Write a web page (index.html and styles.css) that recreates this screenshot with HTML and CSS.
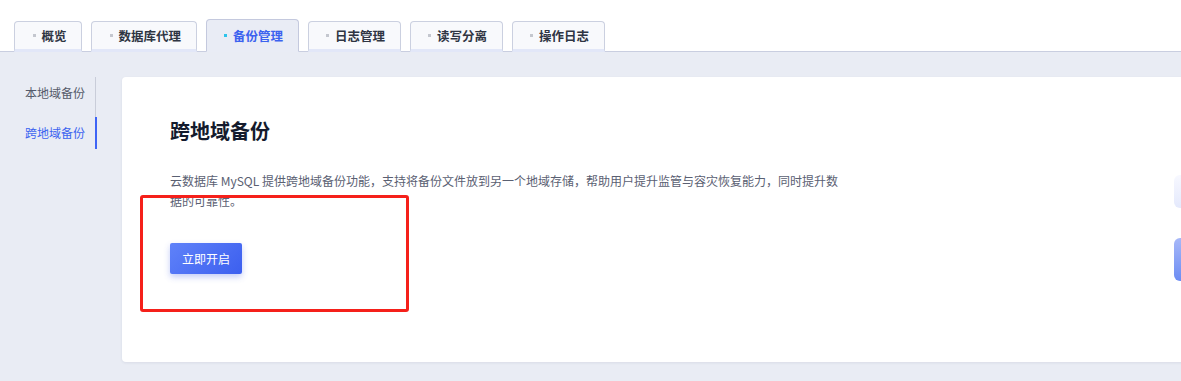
FILE: index.html
```html
<!DOCTYPE html>
<html lang="zh-CN">
<head>
    <meta charset="UTF-8">
    <meta name="viewport" content="width=device-width, initial-scale=1.0">
    <title>跨地域备份</title>
    <link rel="stylesheet" href="styles.css">
</head>
<body>
    <!-- Tabs -->
    <div class="tab-bar">
        <div class="tab"><span class="dot"></span>概览</div>
        <div class="tab"><span class="dot"></span>数据库代理</div>
        <div class="tab active"><span class="dot"></span>备份管理</div>
        <div class="tab"><span class="dot"></span>日志管理</div>
        <div class="tab"><span class="dot"></span>读写分离</div>
        <div class="tab"><span class="dot"></span>操作日志</div>
    </div>

    <div class="main">
        <!-- Side nav -->
        <div class="side-nav">
            <div class="nav-item">本地域备份</div>
            <div class="nav-item active">跨地域备份</div>
        </div>

        <!-- Content card -->
        <div class="card">
            <h2 class="card-title">跨地域备份</h2>
            <p class="card-desc">云数据库 MySQL 提供跨地域备份功能，支持将备份文件放到另一个地域存储，帮助用户提升监管与容灾恢复能力，同时提升数据的可靠性。</p>
            <button class="btn-primary">立即开启</button>
        </div>
    </div>

    <!-- floating tools on the right edge -->
    <div class="float-tool light"></div>
    <div class="float-tool blue"></div>

    <!-- annotation -->
    <div class="highlight-box"></div>
</body>
</html>
```

FILE: styles.css
```css
* {
    margin: 0;
    padding: 0;
    box-sizing: border-box;
}

body {
    font-family: "Noto Sans CJK SC", "Noto Sans", sans-serif;
    background-color: #e9ecf4;
    color: #1b2233;
    width: 1181px;
    height: 381px;
    overflow: hidden;
    position: relative;
}

/* Tabs */
.tab-bar {
    display: flex;
    align-items: flex-end;
    gap: 9px;
    height: 52px;
    padding-left: 14px;
    background-color: #fff;
    border-bottom: 1px solid #c9cee0;
}

.tab {
    display: flex;
    align-items: center;
    gap: 6px;
    height: 31px;
    margin-bottom: -1px;
    padding: 0 14.5px 0 17.5px;
    background-color: #f8f9fc;
    border: 1px solid #cbd0e0;
    border-bottom: 3px solid #e2e7f8;
    border-radius: 4px 4px 0 0;
    font-size: 12.5px;
    font-weight: 700;
    color: #2f3543;
}

.tab .dot {
    width: 3px;
    height: 3px;
    background-color: #c4c7cf;
}

.tab.active {
    height: 33px;
    background-color: #e9ecf5;
    border-color: #c4c9de;
    border-bottom: 1px solid #e9ecf5;
    color: #3b62ef;
}

.tab.active .dot {
    background-color: #2cc3ea;
}

/* Main area */
.main {
    display: flex;
    align-items: flex-start;
    padding-top: 25px;
}

.side-nav {
    flex: 0 0 96px;
    display: flex;
    flex-direction: column;
    gap: 8px;
    padding-left: 25px;
    border-right: 1px solid #c9cdd9;
}

.nav-item {
    position: relative;
    height: 32px;
    line-height: 32px;
    font-size: 12px;
    white-space: nowrap;
    color: #545a6a;
}

.nav-item.active {
    color: #3b63f0;
}

.nav-item.active::after {
    content: "";
    position: absolute;
    top: 0;
    right: -2px;
    width: 2px;
    height: 100%;
    background-color: #3e64f5;
}

.card {
    flex: 0 0 1100px;
    height: 285px;
    margin-left: 26px;
    padding: 40px 48px;
    background-color: #fff;
    border-radius: 4px;
    box-shadow: 0 1px 3px rgba(30, 40, 80, 0.08);
}

.card-title {
    font-size: 20px;
    line-height: 28px;
    font-weight: 700;
    color: #141b2d;
}

.card-desc {
    width: 676px;
    margin-top: 26px;
    font-size: 12px;
    line-height: 20px;
    color: #5a6072;
}

.btn-primary {
    margin-top: 32px;
    width: 72px;
    height: 31px;
    border: none;
    border-radius: 2px;
    background: linear-gradient(135deg, #5f82f9, #3c5fef);
    box-shadow: 0 3px 6px rgba(60, 90, 230, 0.3);
    color: #fff;
    font-family: inherit;
    font-size: 12px;
}

.float-tool {
    position: absolute;
    left: 1174px;
    width: 24px;
    border-radius: 6px;
}

.float-tool.light {
    top: 175px;
    height: 33px;
    background: linear-gradient(180deg, #f7f8ff, #e4e9fc);
}

.float-tool.blue {
    top: 238px;
    height: 43px;
    background: linear-gradient(180deg, #a7b8f8, #6c8cf3);
}

.highlight-box {
    position: absolute;
    left: 140px;
    top: 195px;
    width: 269px;
    height: 117px;
    border: 3px solid #f5201a;
    border-radius: 3px;
}
```
